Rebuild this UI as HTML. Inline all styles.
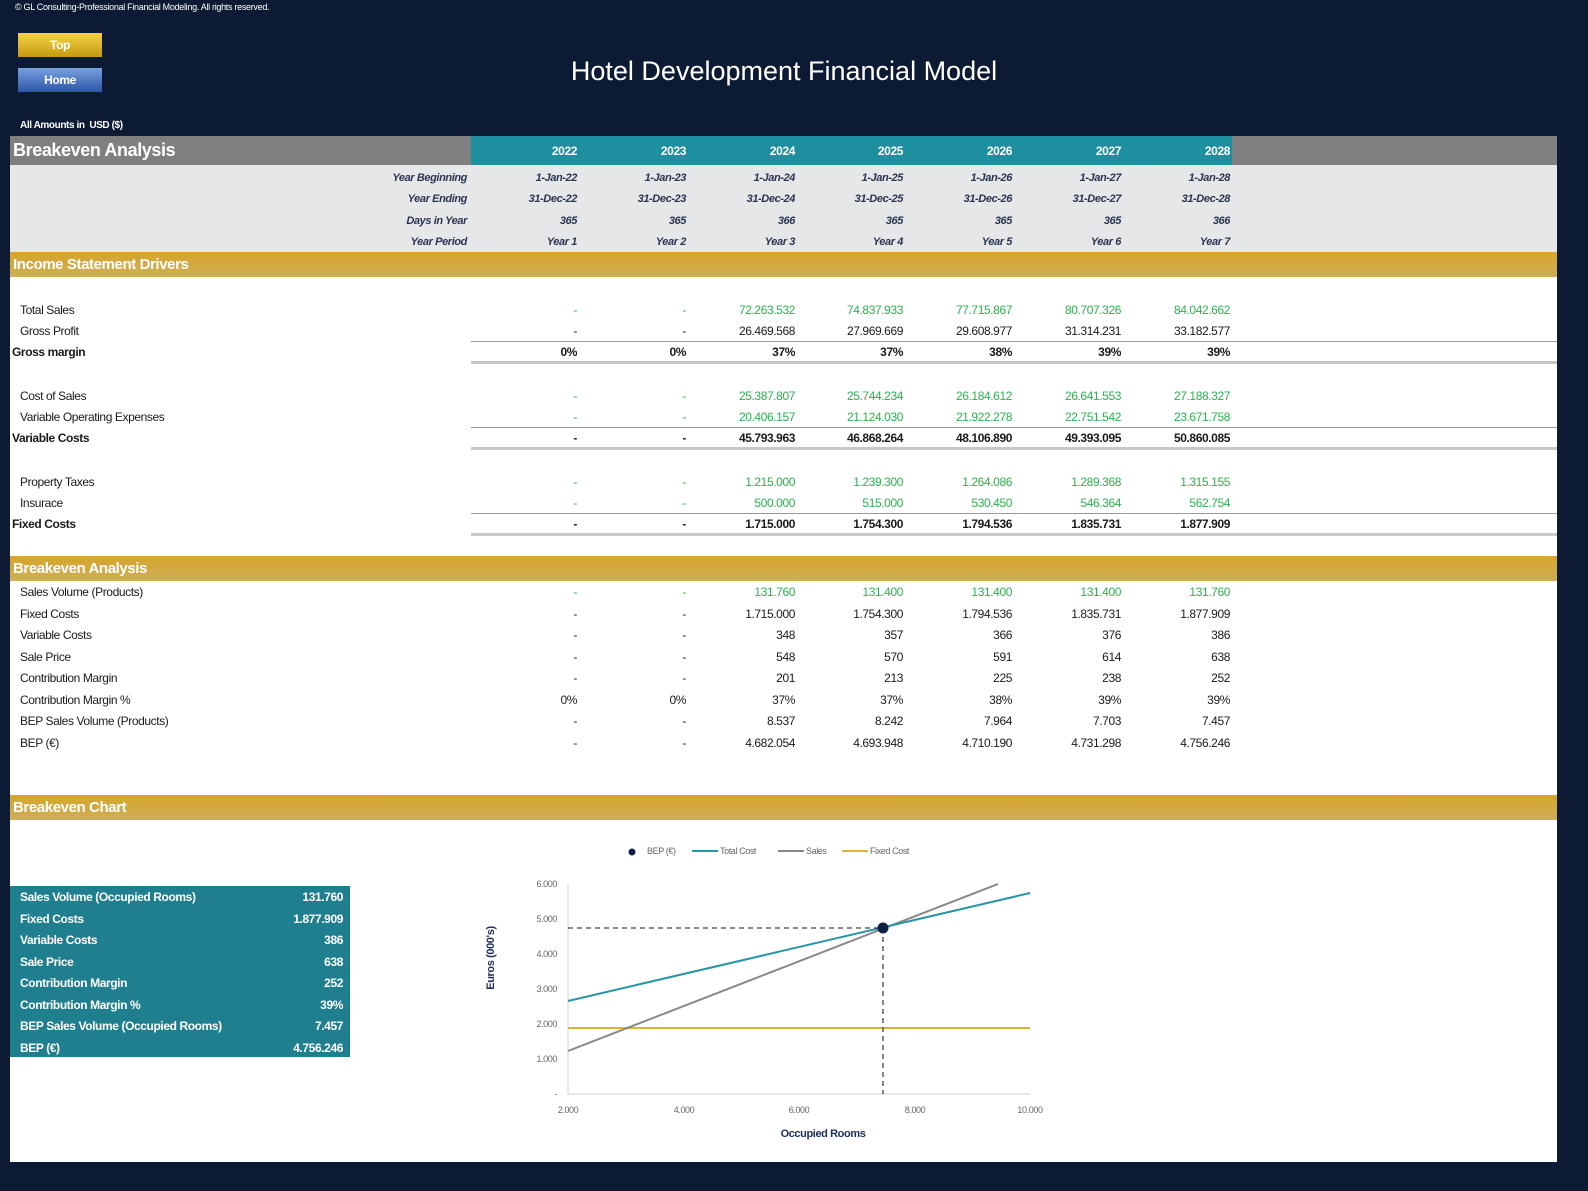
<!DOCTYPE html>
<html><head><meta charset="utf-8"><style>
*{margin:0;padding:0;box-sizing:border-box}
body{width:1588px;height:1191px;background:#0c1a33;position:relative;overflow:hidden;font-family:"Liberation Sans",sans-serif;font-size:12px;color:#1a1a1a;letter-spacing:-0.4px}
.a{position:absolute}
.r{position:absolute;height:20px;line-height:20px;white-space:nowrap}
.v{position:absolute;width:100px;text-align:right}
.g{color:#2bb24c}
.b{font-weight:bold}
.hd{position:absolute;left:10px;width:1547px;height:25px;background:linear-gradient(#d6a52a,#cfae58);color:#fff;font-weight:bold;font-size:15px;line-height:25px;padding-left:3px}
.ln{position:absolute;left:471px;width:1086px;height:1px;background:#999}
.dl{position:absolute;left:471px;width:1086px;height:3px;background:#c8c8c8}
.it{font-style:italic;font-weight:bold;color:#2a3550;font-size:11px}
</style></head><body>
<div class="a" style="left:15px;top:2px;color:#fff;font-size:9px;letter-spacing:-0.3px">© GL Consulting-Professional Financial Modeling. All rights reserved.</div>
<div class="a" style="left:18px;top:33px;width:84px;height:24px;background:linear-gradient(#f5d34a,#c49a10);color:#fff;font-size:12px;font-weight:bold;text-align:center;line-height:24px">Top</div>
<div class="a" style="left:18px;top:68px;width:84px;height:24px;background:linear-gradient(#7aa2e0,#2b55a8);color:#fff;font-size:12px;font-weight:bold;text-align:center;line-height:24px">Home</div>
<div class="a" style="left:0;top:56px;width:1568px;text-align:center;color:#fff;font-size:27px;letter-spacing:0">Hotel Development Financial Model</div>
<div class="a" style="left:20px;top:120px;color:#fff;font-size:10px;font-weight:bold">All Amounts in &nbsp;USD ($)</div>

<div class="a" style="left:10px;top:136px;width:1547px;height:1026px;background:#fff"></div>
<div class="a" style="left:10px;top:136px;width:1547px;height:29px;background:#7f7f7f"></div>
<div class="a" style="left:471px;top:136px;width:761px;height:29px;background:#1e8f9e"></div>
<div class="a" style="left:13px;top:140px;color:#fff;font-size:18px;font-weight:bold">Breakeven Analysis</div>
<div class="a" style="left:10px;top:165px;width:1547px;height:87px;background:#e6e7e9"></div>

<div class="hd" style="top:252px">Income Statement Drivers</div>
<div class="hd" style="top:556px">Breakeven Analysis</div>
<div class="hd" style="top:795px">Breakeven Chart</div>

<div class="ln" style="top:341px"></div><div class="dl" style="top:361px"></div>
<div class="ln" style="top:427px"></div><div class="dl" style="top:447px"></div>
<div class="ln" style="top:513px"></div><div class="dl" style="top:533px"></div>

<div class="a" style="left:10px;top:886px;width:340px;height:171px;background:#1f7f8e"></div>

<div id="c"></div>

<svg class="a" style="left:0;top:0" width="1588" height="1191">
<g font-family="Liberation Sans,sans-serif" font-size="9" fill="#666">
<circle cx="632" cy="852" r="3.5" fill="#0e1f45"/><text x="647" y="854">BEP (€)</text>
<line x1="692" y1="851" x2="718" y2="851" stroke="#2596a6" stroke-width="2"/><text x="720" y="854">Total Cost</text>
<line x1="778" y1="851" x2="804" y2="851" stroke="#888" stroke-width="2"/><text x="806" y="854">Sales</text>
<line x1="842" y1="851" x2="868" y2="851" stroke="#e0b233" stroke-width="2"/><text x="870" y="854">Fixed Cost</text>
<text x="557" y="887" text-anchor="end">6.000</text><text x="557" y="922" text-anchor="end">5.000</text><text x="557" y="957" text-anchor="end">4.000</text><text x="557" y="992" text-anchor="end">3.000</text><text x="557" y="1027" text-anchor="end">2.000</text><text x="557" y="1062" text-anchor="end">1.000</text><text x="557" y="1097" text-anchor="end">-</text>
<text x="568" y="1113" text-anchor="middle">2.000</text><text x="684" y="1113" text-anchor="middle">4.000</text><text x="799" y="1113" text-anchor="middle">6.000</text><text x="915" y="1113" text-anchor="middle">8.000</text><text x="1030" y="1113" text-anchor="middle">10.000</text>
</g>
<line x1="568" y1="884" x2="568" y2="1094" stroke="#d0d0d0"/>
<line x1="568" y1="1094" x2="1030" y2="1094" stroke="#d0d0d0"/>
<line x1="568" y1="1028" x2="1030" y2="1028" stroke="#e0b233" stroke-width="2"/>
<line x1="568" y1="1051" x2="998" y2="884" stroke="#888" stroke-width="2"/>
<line x1="568" y1="1001" x2="1030" y2="893" stroke="#2596a6" stroke-width="2"/>
<line x1="568" y1="928" x2="883" y2="928" stroke="#444" stroke-dasharray="5,4" stroke-width="1.3"/>
<line x1="883" y1="928" x2="883" y2="1094" stroke="#444" stroke-dasharray="5,4" stroke-width="1.3"/>
<circle cx="883" cy="928" r="5.5" fill="#0e1f45"/>
<text x="823" y="1137" text-anchor="middle" font-family="Liberation Sans,sans-serif" font-size="11" font-weight="bold" fill="#1f2d5a" letter-spacing="-0.4">Occupied Rooms</text>
<text transform="translate(494,958) rotate(-90)" text-anchor="middle" font-family="Liberation Sans,sans-serif" font-size="11" font-weight="bold" fill="#1f2d5a" letter-spacing="-0.4">Euros (000's)</text>
</svg>

<script>
var xs=[577,686,795,903,1012,1121,1230];
var h='';
function row(y,label,vals,cls,lcls,lx){
 h+='<div class="r '+(lcls||'')+'" style="top:'+y+'px;left:'+(lx||20)+'px">'+label+'</div>';
 vals.forEach(function(v,i){h+='<div class="r v '+(cls[i]||'')+'" style="top:'+y+'px;left:'+(xs[i]-100)+'px">'+v+'</div>';});
}
var W='color:#fff;font-weight:bold;font-size:12px';
xs.forEach(function(x,i){h+='<div class="r v" style="top:141px;left:'+(x-100)+'px;'+W+'">'+(2022+i)+'</div>';});
function hdr(y,l,v){h+='<div class="r it" style="top:'+y+'px;left:267px;width:200px;text-align:right">'+l+'</div>';v.forEach(function(t,i){h+='<div class="r v it" style="top:'+y+'px;left:'+(xs[i]-100)+'px">'+t+'</div>';});}
hdr(168,'Year Beginning',['1-Jan-22','1-Jan-23','1-Jan-24','1-Jan-25','1-Jan-26','1-Jan-27','1-Jan-28']);
hdr(189,'Year Ending',['31-Dec-22','31-Dec-23','31-Dec-24','31-Dec-25','31-Dec-26','31-Dec-27','31-Dec-28']);
hdr(211,'Days in Year',['365','365','366','365','365','365','366']);
hdr(232,'Year Period',['Year 1','Year 2','Year 3','Year 4','Year 5','Year 6','Year 7']);
var G=['g','g','g','g','g','g','g'],B=['b','b','b','b','b','b','b'];
row(300,'Total Sales',['-','-','72.263.532','74.837.933','77.715.867','80.707.326','84.042.662'],G);
row(321,'Gross Profit',['-','-','26.469.568','27.969.669','29.608.977','31.314.231','33.182.577'],[]);
row(342,'Gross margin',['0%','0%','37%','37%','38%','39%','39%'],B,'b',12);
row(386,'Cost of Sales',['-','-','25.387.807','25.744.234','26.184.612','26.641.553','27.188.327'],G);
row(407,'Variable Operating Expenses',['-','-','20.406.157','21.124.030','21.922.278','22.751.542','23.671.758'],G);
row(428,'Variable Costs',['-','-','45.793.963','46.868.264','48.106.890','49.393.095','50.860.085'],B,'b',12);
row(472,'Property Taxes',['-','-','1.215.000','1.239.300','1.264.086','1.289.368','1.315.155'],G);
row(493,'Insurace',['-','-','500.000','515.000','530.450','546.364','562.754'],G);
row(514,'Fixed Costs',['-','-','1.715.000','1.754.300','1.794.536','1.835.731','1.877.909'],B,'b',12);
row(582,'Sales Volume (Products)',['-','-','131.760','131.400','131.400','131.400','131.760'],G);
row(604,'Fixed Costs',['-','-','1.715.000','1.754.300','1.794.536','1.835.731','1.877.909'],[]);
row(625,'Variable Costs',['-','-','348','357','366','376','386'],[]);
row(647,'Sale Price',['-','-','548','570','591','614','638'],[]);
row(668,'Contribution Margin',['-','-','201','213','225','238','252'],[]);
row(690,'Contribution Margin %',['0%','0%','37%','37%','38%','39%','39%'],[]);
row(711,'BEP Sales Volume (Products)',['-','-','8.537','8.242','7.964','7.703','7.457'],[]);
row(733,'BEP (€)',['-','-','4.682.054','4.693.948','4.710.190','4.731.298','4.756.246'],[]);
var bx=[['Sales Volume (Occupied Rooms)','131.760'],['Fixed Costs','1.877.909'],['Variable Costs','386'],['Sale Price','638'],['Contribution Margin','252'],['Contribution Margin %','39%'],['BEP Sales Volume (Occupied Rooms)','7.457'],['BEP (€)','4.756.246']];
bx.forEach(function(b,i){var y=887+i*21.5;h+='<div class="r" style="top:'+y+'px;left:20px;width:210px;overflow:hidden;color:#fff;font-weight:bold">'+b[0]+'</div><div class="r" style="top:'+y+'px;left:240px;width:103px;text-align:right;color:#fff;font-weight:bold">'+b[1]+'</div>';});
document.getElementById('c').innerHTML=h;
</script>
</body></html>
